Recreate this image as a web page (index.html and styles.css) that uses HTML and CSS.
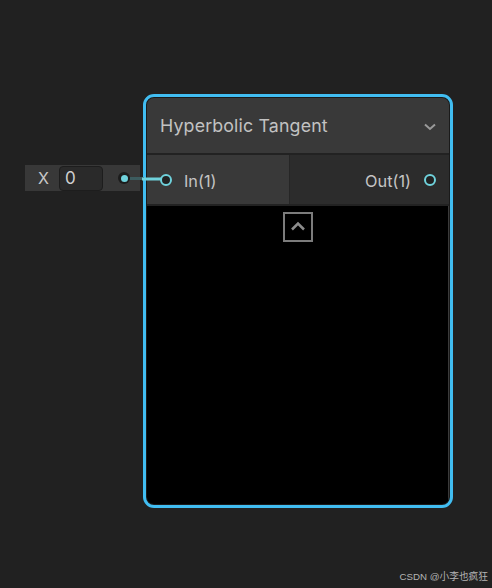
FILE: index.html
```html
<!DOCTYPE html>
<html>
<head>
<meta charset="utf-8">
<link rel="stylesheet" href="styles.css">
</head>
<body>
<div class="canvas">
  <div class="prop">
    <span class="prop-label">X</span>
    <div class="prop-input">0</div>
    <div class="prop-port"><span class="dot"></span></div>
  </div>

  <div class="node">
    <div class="node-inner">
      <div class="header">
        <span class="title">Hyperbolic Tangent</span>
        <svg class="chev" width="14" height="8" viewBox="0 0 14 8"><path d="M2 1.5 L7 6 L12 1.5" fill="none" stroke="#9a9a9a" stroke-width="2"/></svg>
      </div>
      <div class="ports">
        <div class="port-in">
          <span class="ring"></span>
          <span class="port-label">In(1)</span>
        </div>
        <div class="port-out">
          <span class="port-label">Out(1)</span>
          <span class="ring"></span>
        </div>
      </div>
      <div class="preview">
        <div class="collapse">
          <svg width="16" height="10" viewBox="0 0 16 10"><path d="M2 8.5 L8 2.5 L14 8.5" fill="none" stroke="#8c8c8c" stroke-width="2.5"/></svg>
        </div>
      </div>
    </div>
  </div>

  <svg class="wires" width="492" height="588" viewBox="0 0 492 588">
    <line x1="130" y1="178.5" x2="144" y2="178.5" stroke="#3d5c5f" stroke-width="3"/>
    <line x1="142" y1="179" x2="161" y2="179" stroke="#6fd2dc" stroke-width="3"/>
  </svg>

  <div class="watermark">CSDN @小李也疯狂</div>
</div>
</body>
</html>
```
FILE: styles.css
```css
html, body {
  margin: 0;
  padding: 0;
  background: #212121;
}
body {
  font-family: Inter, "Noto Sans", "Noto Sans CJK SC", sans-serif;
  color: #c4c4c4;
}
.canvas {
  position: relative;
  width: 492px;
  height: 588px;
  overflow: hidden;
}
.prop {
  position: absolute;
  left: 25px;
  top: 165px;
  width: 115px;
  height: 26px;
  background: #383838;
  display: flex;
  align-items: center;
  box-sizing: border-box;
}
.prop-label {
  font-size: 16px;
  color: #c8c8c8;
  margin-left: 13px;
  width: 21px;
}
.prop-input {
  width: 44px;
  height: 25px;
  box-sizing: border-box;
  background: #2a2a2a;
  border: 1px solid #1d1d1d;
  border-radius: 4px;
  font-size: 17px;
  line-height: 22px;
  padding-left: 5px;
  color: #d0d0d0;
}
.prop-port {
  margin-left: 15px;
  width: 12px;
  height: 12px;
  border-radius: 50%;
  background: #1c1c1c;
  display: flex;
  align-items: center;
  justify-content: center;
}
.prop-port .dot {
  width: 7px;
  height: 7px;
  border-radius: 50%;
  background: #6fd2dc;
}
.node {
  position: absolute;
  left: 143px;
  top: 94px;
  width: 310px;
  height: 414px;
  box-sizing: border-box;
  border: 3px solid #41bdf1;
  border-radius: 11px;
  background: #1a1a1a;
  padding: 1px;
}
.node-inner {
  display: flex;
  flex-direction: column;
  height: 100%;
  border-radius: 7px;
  overflow: hidden;
  gap: 2px;
  background: #222222;
}
.header {
  height: 55px;
  flex: none;
  background: #393939;
  display: flex;
  align-items: center;
  justify-content: space-between;
  padding: 0 12px 0 13px;
}
.title {
  font-size: 17.8px;
  color: #c2c2c2;
  letter-spacing: 0.15px;
}
.chev {
  margin-top: 3px;
}
.ports {
  height: 49px;
  flex: none;
  display: flex;
  gap: 1px;
  background: #262626;
}
.port-in {
  width: 142px;
  background: #393939;
  display: flex;
  align-items: center;
  padding-left: 13px;
  box-sizing: border-box;
}
.port-out {
  flex: 1;
  background: #2c2c2c;
  display: flex;
  align-items: center;
  justify-content: flex-end;
  padding-right: 13px;
}
.ring {
  width: 12px;
  height: 12px;
  box-sizing: border-box;
  border: 2px solid #6fd2dc;
  border-radius: 50%;
  background: #222;
}
.port-label {
  font-size: 16.3px;
  color: #c4c4c4;
  margin-top: 3px;
}
.port-in .port-label {
  margin-left: 12px;
}
.port-out .port-label {
  margin-right: 13px;
}
.preview {
  flex: 1;
  background: #000;
  border-right: 1px solid #3a3a3a;
  display: flex;
  justify-content: center;
  align-items: flex-start;
  padding-top: 6px;
}
.collapse {
  width: 30px;
  height: 30px;
  box-sizing: border-box;
  border: 2px solid #7c7c7c;
  display: flex;
  align-items: center;
  justify-content: center;
  margin-left: 1px;
}
.collapse svg {
  margin-top: -2px;
}
.wires {
  position: absolute;
  left: 0;
  top: 0;
  pointer-events: none;
}
.watermark {
  position: absolute;
  right: 4px;
  bottom: 5px;
  font-family: "Liberation Sans", "Noto Sans CJK SC", sans-serif;
  font-size: 9.7px;
  color: #b4b4b4;
}
```
